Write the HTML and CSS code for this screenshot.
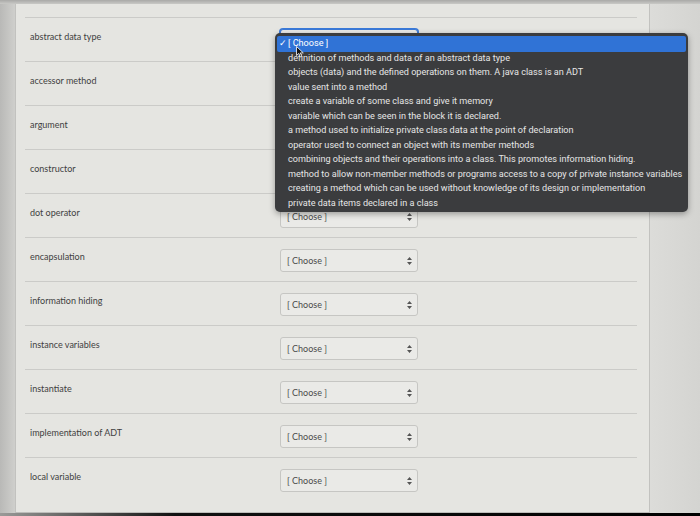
FILE: index.html
```html
<!DOCTYPE html>
<html>
  <head>
    <link rel="stylesheet" href="styles.css">
  </head>
  <body>
    <div class="screen">
      <div class="topband"></div>
      <div class="main">
        <div class="edge"></div>
        <div class="panel">
          <div class="row">
            <div class="term">abstract data type</div>
            <div class="pick focused"><span>[ Choose ]</span><svg class="arrows" width="5" height="8" viewBox="0 0 5 8"><path d="M2.5 0 L5 3 L0 3 Z M2.5 8 L5 5 L0 5 Z" fill="#555"/></svg></div>
          </div>
          <div class="row">
            <div class="term">accessor method</div>
            <div class="pick"><span>[ Choose ]</span><svg class="arrows" width="5" height="8" viewBox="0 0 5 8"><path d="M2.5 0 L5 3 L0 3 Z M2.5 8 L5 5 L0 5 Z" fill="#555"/></svg></div>
          </div>
          <div class="row">
            <div class="term">argument</div>
            <div class="pick"><span>[ Choose ]</span><svg class="arrows" width="5" height="8" viewBox="0 0 5 8"><path d="M2.5 0 L5 3 L0 3 Z M2.5 8 L5 5 L0 5 Z" fill="#555"/></svg></div>
          </div>
          <div class="row">
            <div class="term">constructor</div>
            <div class="pick"><span>[ Choose ]</span><svg class="arrows" width="5" height="8" viewBox="0 0 5 8"><path d="M2.5 0 L5 3 L0 3 Z M2.5 8 L5 5 L0 5 Z" fill="#555"/></svg></div>
          </div>
          <div class="row">
            <div class="term">dot operator</div>
            <div class="pick"><span>[ Choose ]</span><svg class="arrows" width="5" height="8" viewBox="0 0 5 8"><path d="M2.5 0 L5 3 L0 3 Z M2.5 8 L5 5 L0 5 Z" fill="#555"/></svg></div>
          </div>
          <div class="row">
            <div class="term">encapsulation</div>
            <div class="pick"><span>[ Choose ]</span><svg class="arrows" width="5" height="8" viewBox="0 0 5 8"><path d="M2.5 0 L5 3 L0 3 Z M2.5 8 L5 5 L0 5 Z" fill="#555"/></svg></div>
          </div>
          <div class="row">
            <div class="term">information hiding</div>
            <div class="pick"><span>[ Choose ]</span><svg class="arrows" width="5" height="8" viewBox="0 0 5 8"><path d="M2.5 0 L5 3 L0 3 Z M2.5 8 L5 5 L0 5 Z" fill="#555"/></svg></div>
          </div>
          <div class="row">
            <div class="term">instance variables</div>
            <div class="pick"><span>[ Choose ]</span><svg class="arrows" width="5" height="8" viewBox="0 0 5 8"><path d="M2.5 0 L5 3 L0 3 Z M2.5 8 L5 5 L0 5 Z" fill="#555"/></svg></div>
          </div>
          <div class="row">
            <div class="term">instantiate</div>
            <div class="pick"><span>[ Choose ]</span><svg class="arrows" width="5" height="8" viewBox="0 0 5 8"><path d="M2.5 0 L5 3 L0 3 Z M2.5 8 L5 5 L0 5 Z" fill="#555"/></svg></div>
          </div>
          <div class="row">
            <div class="term">implementation of ADT</div>
            <div class="pick"><span>[ Choose ]</span><svg class="arrows" width="5" height="8" viewBox="0 0 5 8"><path d="M2.5 0 L5 3 L0 3 Z M2.5 8 L5 5 L0 5 Z" fill="#555"/></svg></div>
          </div>
          <div class="row">
            <div class="term">local variable</div>
            <div class="pick"><span>[ Choose ]</span><svg class="arrows" width="5" height="8" viewBox="0 0 5 8"><path d="M2.5 0 L5 3 L0 3 Z M2.5 8 L5 5 L0 5 Z" fill="#555"/></svg></div>
          </div>
        </div>
        <div class="outside"></div>
      </div>
      <div class="bottomband"></div>

      <!-- the open list of the first select -->
      <div class="menu">
        <div class="option selected"><span class="check">&#10003;</span>[ Choose ]</div>
        <div class="option">definition of methods and data of an abstract data type</div>
        <div class="option">objects (data) and the defined operations on them. A java class is an ADT</div>
        <div class="option">value sent into a method</div>
        <div class="option">create a variable of some class and give it memory</div>
        <div class="option">variable which can be seen in the block it is declared.</div>
        <div class="option">a method used to initialize private class data at the point of declaration</div>
        <div class="option">operator used to connect an object with its member methods</div>
        <div class="option">combining objects and their operations into a class. This promotes information hiding.</div>
        <div class="option">method to allow non-member methods or programs access to a copy of private instance variables</div>
        <div class="option">creating a method which can be used without knowledge of its design or implementation</div>
        <div class="option">private data items declared in a class</div>
      </div>
      <svg class="cursor" width="8" height="12" viewBox="0 0 8 12"><path d="M0.5 0.5 L0.5 9.5 L2.8 7.4 L4.4 11 L5.8 10.4 L4.3 6.9 L7.3 6.9 Z" fill="#111" stroke="#fff" stroke-width="0.8"/></svg>
    </div>
  </body>
</html>
```

FILE: styles.css
```css
body {
  margin: 0;
  background-color: #d8d8d5;
}

.screen {
  position: relative;
  width: 700px;
  height: 516px;
  overflow: hidden;
  display: flex;
  flex-direction: column;
}

.topband {
  height: 4px;
  background: linear-gradient(to bottom, #a9a9a7, #c9c9c6);
}

.main {
  display: flex;
  flex: 1;
}

.edge {
  width: 15px;
  background: linear-gradient(to right, #b9b9b7, #cfcfcc);
}

.panel {
  width: 612px;
  padding: 13px 12px 10px 9px;
  background-color: #e5e5e1;
  border-left: 1px solid #c2c2bf;
  border-right: 1px solid #c2c2bf;
  border-bottom: 1px solid #bdbdba;
}

.outside {
  flex: 1;
  background: linear-gradient(to right, #dcdcd9, #d4d4d1);
}

.bottomband {
  height: 3px;
  background: linear-gradient(to right, #9a9a98 0%, #111 25%, #000 100%);
}

.row {
  display: flex;
  height: 43px;
  border-top: 1px solid #cbcbc8;
}

.term {
  width: 255px;
  padding: 13px 0 0 5px;
  box-sizing: border-box;
  font-family: Lato, "Open Sans", sans-serif;
  font-size: 9px;
  line-height: 12px;
  color: #3f3f3f;
}

.pick {
  margin-top: 11px;
  width: 138px;
  height: 23px;
  box-sizing: border-box;
  padding: 0 5px 0 6px;
  display: flex;
  align-items: center;
  justify-content: space-between;
  background-color: #eaeae7;
  border: 1px solid #c6c6c3;
  border-radius: 3px;
  font-family: Lato, "Open Sans", sans-serif;
  font-size: 9px;
  color: #4a4a4a;
}

.focused {
  border-color: #3b7ad8;
  box-shadow: 0 0 0 1px #3b7ad8;
}

.menu {
  position: absolute;
  left: 275px;
  top: 33px;
  width: 413px;
  padding: 3px 2px 2px 2px;
  box-sizing: border-box;
  background-color: #3b3c3e;
  border-radius: 5px;
  box-shadow: 0 2px 6px rgba(0, 0, 0, 0.35);
  font-family: Roboto, "Liberation Sans", sans-serif;
  font-size: 9.1px;
  color: #e6e6e6;
}

.option {
  height: 14.5px;
  line-height: 14.5px;
  padding-left: 11px;
  white-space: nowrap;
}

.selected {
  height: 16px;
  line-height: 15px;
  margin-bottom: -1.5px;
  background-color: #3073d6;
  border-radius: 2px;
  color: #ffffff;
}

.check {
  display: inline-block;
  width: 9px;
  margin-left: -9px;
}

.cursor {
  position: absolute;
  left: 296px;
  top: 46px;
}
```
